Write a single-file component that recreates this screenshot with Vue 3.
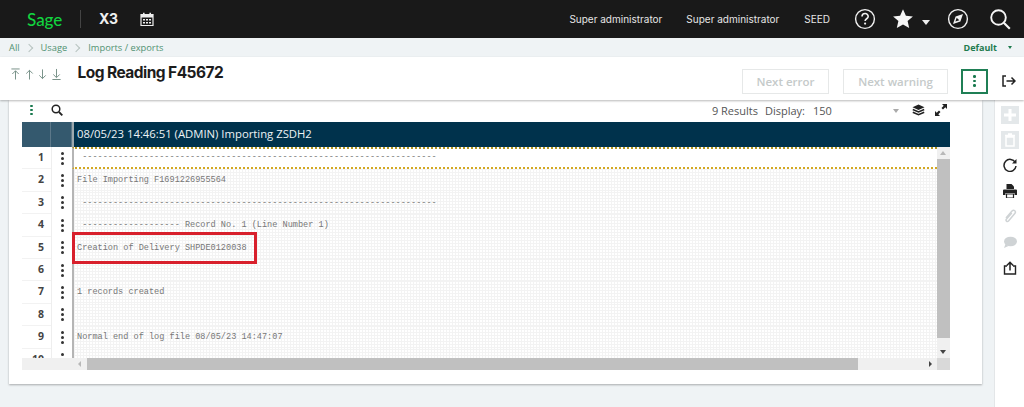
<script setup>
const rows = [
  { n: 1, t: ' ---------------------------------------------------------------------', focus: true },
  { n: 2, t: 'File Importing F1691226955564' },
  { n: 3, t: ' ---------------------------------------------------------------------' },
  { n: 4, t: ' ------------------- Record No. 1 (Line Number 1)' },
  { n: 5, t: 'Creation of Delivery SHPDE0120038' },
  { n: 6, t: '' },
  { n: 7, t: '1 records created' },
  { n: 8, t: '' },
  { n: 9, t: 'Normal end of log file 08/05/23 14:47:07' },
  { n: 10, t: '' }
]
</script>

<template>
  <div class="page">
    <header class="topbar">
      <span class="logo">Sage</span>
      <span class="vsep"></span>
      <span class="x3">X3</span>
      <svg class="cal" width="14" height="14" viewBox="0 0 14 14">
        <path d="M1 2.500h12v11H1z" fill="none" stroke="#eee" stroke-width="1.200" />
        <path d="M1 2.500h12v3H1zM3 .8h1.600v2.400H3zM9.400 .8H11v2.400H9.400z" fill="#eee" />
        <path d="M3 7h2v1.600H3zM6 7h2v1.600H6zM9 7h2v1.600H9zM3 10h2v1.600H3zM6 10h2v1.600H6zM9 10h2v1.600H9z" fill="#eee" />
      </svg>
      <span class="spring"></span>
      <span class="navtext first">Super administrator</span>
      <span class="navtext second">Super administrator</span>
      <span class="navtext third">SEED</span>
      <svg class="nav-help" width="22" height="22" viewBox="0 0 22 22">
        <circle cx="11" cy="11" r="9.400" fill="none" stroke="#f2f2f2" stroke-width="1.400" />
        <path d="M8 8.600c0-4 6.200-4 6.200-.2 0 2.300-3.100 2.400-3.100 4.600" fill="none" stroke="#f2f2f2" stroke-width="1.600" />
        <circle cx="11.100" cy="15.600" r="1.100" fill="#f2f2f2" />
      </svg>
      <svg class="nav-star" width="22" height="22" viewBox="0 0 22 22">
        <path d="M11 1.200l2.900 6.500 7 .7-5.300 4.700 1.600 7-6.200-3.700-6.200 3.700 1.600-7L1.100 8.400l7-.7z" fill="#f5f5f5" />
      </svg>
      <span class="nav-caret"></span>
      <svg class="nav-compass" width="22" height="22" viewBox="0 0 22 22">
        <circle cx="11" cy="11" r="9.400" fill="none" stroke="#f2f2f2" stroke-width="1.400" />
        <path d="M16 6l-2.600 7.400L6 16l2.600-7.400zM9.700 9.700l-1.300 3.900 3.900-1.300z" fill="#f2f2f2" fill-rule="evenodd" />
      </svg>
      <svg class="nav-search" width="22" height="22" viewBox="0 0 22 22">
        <circle cx="9.500" cy="9.500" r="7.300" fill="none" stroke="#f5f5f5" stroke-width="1.900" />
        <path d="M14.800 14.800l6 6" stroke="#f5f5f5" stroke-width="2.200" />
      </svg>
    </header>

    <nav class="crumbs">
      <span>All</span><i class="chev"></i><span>Usage</span><i class="chev"></i><span>Imports / exports</span>
      <span class="spring"></span>
      <b class="default">Default</b><span class="mini-caret"></span>
    </nav>

    <section class="titlebar">
      <div class="arrows">
        <svg width="11" height="14" viewBox="0 0 12 14"><path d="M1.500 1.500h9M6 13V3.500M2.500 7L6 3.500 9.500 7" fill="none" stroke="#6f8a80" stroke-width="1" /></svg>
        <svg width="11" height="14" viewBox="0 0 12 14"><path d="M6 13V3M2.500 6.500L6 3l3.500 3.500" fill="none" stroke="#6f8a80" stroke-width="1" /></svg>
        <svg width="11" height="14" viewBox="0 0 12 14"><path d="M6 2v10M2.500 8.500L6 12l3.500-3.500" fill="none" stroke="#6f8a80" stroke-width="1" /></svg>
        <svg width="11" height="14" viewBox="0 0 12 14"><path d="M1.500 13h9M6 1.500v9M2.500 7.500L6 11l3.500-3.500" fill="none" stroke="#6f8a80" stroke-width="1" /></svg>
      </div>
      <h1>Log Reading F45672</h1>
      <span class="spring"></span>
      <span class="btn err">Next error</span>
      <span class="btn warn">Next warning</span>
      <span class="kebab-btn"><i></i><i></i><i></i></span>
      <svg class="logout" width="14" height="12" viewBox="0 0 14 12">
        <path d="M4 1H1v10h3" fill="none" stroke="#222" stroke-width="1.500" />
        <path d="M4.500 6H13M9.500 2.500L13 6 9.500 9.500" fill="none" stroke="#222" stroke-width="1.500" />
      </svg>
    </section>

    <div class="workspace">
      <main class="card">
        <div class="tools">
          <span class="green-dots"><i></i><i></i><i></i></span>
          <svg class="find" width="12" height="12" viewBox="0 0 12 12">
            <circle cx="5" cy="5" r="3.800" fill="none" stroke="#222" stroke-width="1.500" />
            <path d="M8 8l3.300 3.300" stroke="#222" stroke-width="1.800" />
          </svg>
          <span class="spring"></span>
          <span class="results">9 Results</span>
          <span class="display">Display:</span>
          <span class="count">150</span>
          <span class="grey-caret"></span>
          <svg class="layers" width="13" height="12" viewBox="0 0 13 12">
            <path d="M6.500 .5l6 2.700-6 2.700-6-2.700z" fill="#222" />
            <path d="M.8 5.500l5.700 2.500 5.700-2.500M.8 8.200l5.700 2.600 5.700-2.600" fill="none" stroke="#222" stroke-width="1.500" />
          </svg>
          <svg class="expand" width="12" height="12" viewBox="0 0 12 12">
            <path d="M7 0h5v5L10.300 3.300 8 5.500 6.500 4l2.200-2.300zM0 12V7l1.700 1.700L4 6.500 5.500 8 3.300 10.300 5 12z" fill="#222" />
          </svg>
        </div>

        <div class="grid">
          <div class="grid-head">
            <span class="hcell num"></span>
            <span class="hcell menu"></span>
            <span class="hcell-title">08/05/23 14:46:51 (ADMIN) Importing ZSDH2</span>
          </div>
          <div class="grid-main">
            <div class="grid-cols">
              <div v-for="r in rows" :key="r.n" class="row">
                <span class="row-num">{{ r.n }}</span>
                <span class="row-menu"><i></i><i></i><i></i></span>
                <span class="row-text" :class="{ focus: r.focus }">{{ r.t }}</span>
              </div>
              <span class="redbox"></span>
            </div>
            <div class="vscroll">
              <span class="vup"></span>
              <span class="vthumb"></span>
              <span class="vdown"></span>
            </div>
          </div>
          <div class="hscroll">
            <span class="hleft"></span>
            <span class="hthumb"></span>
            <span class="hright"></span>
            <span class="hcorner"></span>
          </div>
        </div>
      </main>

      <aside class="rail">
        <svg class="plus" width="18" height="18" viewBox="0 0 18 18"><rect width="18" height="18" fill="#e4e8ea" /><path d="M9 3v12M3 9h12" stroke="#fff" stroke-width="3" /></svg>
        <svg class="trash" width="18" height="18" viewBox="0 0 18 18"><rect width="18" height="18" fill="#e4e8ea" /><path d="M4 4.500h10M7 3h4M5 6h8v9H5z" fill="none" stroke="#fff" stroke-width="1.500" /></svg>
        <svg width="14" height="14" viewBox="0 0 14 14"><path d="M12.300 4.500A6 6 0 1 0 13 8" fill="none" stroke="#222" stroke-width="1.500" /><path d="M13.500 1v4.500H9z" fill="#222" /></svg>
        <svg width="14" height="14" viewBox="0 0 14 14"><path d="M3.500 0h5L11 2.500V5h-7.500z" fill="#222" /><path d="M1 5.500h12a1 1 0 0 1 1 1V11h-2.500V9h-9v2H0V6.500a1 1 0 0 1 1-1z" fill="#222" /><path d="M3.500 10h7v4h-7z" fill="none" stroke="#222" stroke-width="1.200" /></svg>
        <svg width="14" height="14" viewBox="0 0 14 14"><path d="M3 9l6-7c2-2 4.500.5 2.800 2.500L5.500 12c-1.300 1.300-3.300-.3-2-2l5.300-6" fill="none" stroke="#cfd3d5" stroke-width="1.500" /></svg>
        <svg width="14" height="14" viewBox="0 0 14 14"><ellipse cx="7.500" cy="6.500" rx="6.500" ry="4.800" fill="#cfd3d5" /><path d="M2.500 9l-1.500 4 4.500-2z" fill="#cfd3d5" /></svg>
        <svg width="14" height="14" viewBox="0 0 14 14"><path d="M4 5H1.500v8h11V5H10" fill="none" stroke="#222" stroke-width="1.400" /><path d="M7 9.500V1.500M3.800 4.500L7 1.300l3.200 3.200" fill="none" stroke="#222" stroke-width="1.500" /></svg>
      </aside>
    </div>
  </div>
</template>

<style scoped>
.page {
  width: 1024px;
  height: 407px;
  overflow: hidden;
  display: flex;
  flex-direction: column;
  background: #eff3f5;
  font-family: "Open Sans", sans-serif;
  color: #333;
}
.spring { flex: 1; }

.topbar {
  height: 38px;
  flex: none;
  display: flex;
  align-items: center;
  background: #191919;
  color: #eee;
}
.logo {
  margin-left: 27px;
  width: 35px;
  font: 500 17px/1 "Lato", sans-serif;
  color: #12d33f;
}
.vsep { width: 1px; height: 18px; margin-left: 18px; background: #444; }
.x3 { margin-left: 18px; font: 700 14px/1 "Inter", sans-serif; color: #f0f0f0; }
.cal { margin-left: 22px; }
.navtext { font: 400 10px/1 "Inter", sans-serif; color: #e6e6e6; white-space: nowrap; }
.second { margin-left: 24px; }
.third { margin-left: 25px; }
.nav-help { margin-left: 24px; }
.nav-star { margin-left: 16px; }
.nav-caret {
  margin: 7px 0 0 8px;
  border: 4px solid transparent;
  border-top: 5px solid #eee;
  border-bottom: 0;
}
.nav-compass { margin-left: 17px; }
.nav-search { margin: 0 13px 0 20px; }

.crumbs {
  height: 19px;
  flex: none;
  display: flex;
  align-items: center;
  padding: 0 12px 0 9px;
  font-size: 9.300px;
  color: #4f9272;
  background: #eff3f5;
}
.chev {
  width: 5px;
  height: 5px;
  margin: 0 9px 0 6px;
  border-top: 1px solid #b7c3c0;
  border-right: 1px solid #b7c3c0;
  transform: rotate(45deg);
}
.default { font-size: 9px; color: #1e7b4e; font-weight: 700; }
.mini-caret {
  margin-left: 11px;
  border: 2.500px solid transparent;
  border-top: 3px solid #1e7b4e;
  border-bottom: 0;
}

.titlebar {
  height: 43px;
  flex: none;
  position: relative;
  z-index: 2;
  display: flex;
  align-items: center;
  padding: 0 8px 0 10px;
  background: #fff;
  box-shadow: 0 1px 2px rgba(0, 0, 0, 0.28);
}
.arrows { display: flex; gap: 2.500px; margin-top: -9px; }
h1 {
  margin: -12px 0 0 16px;
  font: 700 15.500px/1 "Inter", sans-serif;
  letter-spacing: -0.550px;
  color: #1c1c1c;
}
.btn {
  height: 25px;
  box-sizing: border-box;
  margin-top: 5px;
  display: flex;
  align-items: center;
  justify-content: center;
  border: 1px solid #e6e8e8;
  font-size: 11.500px;
  font-weight: 600;
  color: #c5caca;
}
.btn.err { width: 87px; }
.btn.warn { width: 105px; margin-left: 14px; }
.kebab-btn {
  width: 27px;
  height: 25px;
  box-sizing: border-box;
  margin: 5px 0 0 13px;
  border: 2px solid #1f7f55;
  display: flex;
  flex-direction: column;
  align-items: center;
  justify-content: center;
  gap: 2px;
}
.kebab-btn i { width: 2.500px; height: 2.500px; border-radius: 50%; background: #18794e; }
.logout { margin: 5px 0 0 14px; }

.workspace { flex: 1; min-height: 0; display: flex; }
.card {
  width: 973px;
  height: 284px;
  flex: none;
  margin-left: 9px;
  padding: 0 32px 0 13px;
  box-sizing: border-box;
  background: #fff;
  box-shadow: 0 1px 2px rgba(0, 0, 0, 0.3);
}
.tools {
  height: 22px;
  box-sizing: border-box;
  padding-bottom: 2px;
  display: flex;
  align-items: center;
  font-size: 11px;
  color: #555;
}
.green-dots {
  margin-left: 8px;
  display: flex;
  flex-direction: column;
  gap: 1.500px;
}
.green-dots i { width: 2.500px; height: 2.500px; border-radius: 50%; background: #18794e; }
.find { margin-left: 18px; }
.results { margin-right: 7px; }
.display { margin-right: 8px; }
.count { width: 80px; }
.grey-caret {
  margin: 2px 0 0 0;
  border: 3.500px solid transparent;
  border-top: 4px solid #aaa;
  border-bottom: 0;
}
.layers { margin-left: 13px; }
.expand { margin: 0 3px 0 10px; }

.grid { width: 928px; }
.grid-head { height: 25px; display: flex; background: #00324c; }
.hcell { background: #34596e; border-right: 1px solid #5c7889; box-sizing: border-box; }
.hcell.num { width: 29px; }
.hcell.menu { width: 21px; }
.hcell-title {
  flex: 1;
  padding-left: 3px;
  border-left: 2px solid #9da9ae;
  font-size: 11.300px;
  line-height: 24px;
  color: #eef3f5;
}
.grid-main { height: 211px; display: flex; }
.grid-cols { width: 915px; position: relative; overflow: hidden; }
.row { height: 22.400px; display: flex; }
.row-num {
  width: 29px;
  box-sizing: border-box;
  padding-right: 7px;
  text-align: right;
  font-size: 10.500px;
  font-weight: 700;
  line-height: 20px;
  color: #444;
  border-bottom: 1px solid #f2f2f2;
  background: #fff;
}
.row-menu {
  width: 21px;
  display: flex;
  flex-direction: column;
  align-items: center;
  justify-content: center;
  gap: 2px;
  border-left: 1px solid #eee;
  box-sizing: border-box;
}
.row-menu i { width: 3px; height: 3px; border-radius: 50%; background: #333; }
.row-text {
  flex: 1;
  box-sizing: border-box;
  padding-left: 3px;
  border-left: 2px solid #b5b5b5;
  font: 400 8.570px/23px "Liberation Mono", monospace;
  color: #777;
  white-space: pre;
  overflow: hidden;
  background-color: #fff;
  background-image:
    linear-gradient(#f3f3f3 1px, transparent 1px),
    linear-gradient(90deg, #f3f3f3 1px, transparent 1px);
  background-size: 3px 3px;
}
.row-text.focus {
  border-top: 2px dotted #b3951f;
  border-bottom: 2px dotted #d3a823;
  line-height: 16px;
  background: #fff;
}
.redbox {
  position: absolute;
  left: 50px;
  top: 85px;
  width: 185px;
  height: 32px;
  box-sizing: border-box;
  border: 3px solid #d8202c;
}
.vscroll { width: 13px; display: flex; flex-direction: column; background: #f0f0f0; }
.vup, .vdown { height: 12px; position: relative; flex: none; }
.vup::after, .vdown::after {
  content: "";
  position: absolute;
  left: 3px;
  top: 4px;
  border: 3.500px solid transparent;
}
.vup::after { border-top: 0; border-bottom: 4px solid #b8b8b8; }
.vdown { margin-top: 8px; }
.vdown::after { border-bottom: 0; border-top: 4px solid #444; }
.vthumb { height: 179px; background: #c0c0c0; }
.hscroll { height: 12px; display: flex; background: #f0f0f0; }
.hleft { width: 65px; position: relative; }
.hleft::after {
  content: "";
  position: absolute;
  right: 6px;
  top: 3px;
  border: 3px solid transparent;
  border-left: 0;
  border-right: 3.500px solid #b8b8b8;
}
.hthumb { width: 771px; background: #c0c0c0; }
.hright { flex: 1; position: relative; }
.hright::after {
  content: "";
  position: absolute;
  right: 5px;
  top: 3px;
  border: 3px solid transparent;
  border-right: 0;
  border-left: 3.500px solid #444;
}
.hcorner { width: 13px; background: #d9d9d9; }

.rail {
  width: 30px;
  margin-left: 12px;
  padding-top: 6px;
  box-sizing: border-box;
  display: flex;
  flex-direction: column;
  align-items: center;
  gap: 11.600px;
  background: #fff;
  border-left: 1px solid #e3e6e8;
}
.rail svg { flex: none; }
.rail .plus { margin-bottom: -5px; }
.rail .trash { margin-bottom: -2px; }
</style>
